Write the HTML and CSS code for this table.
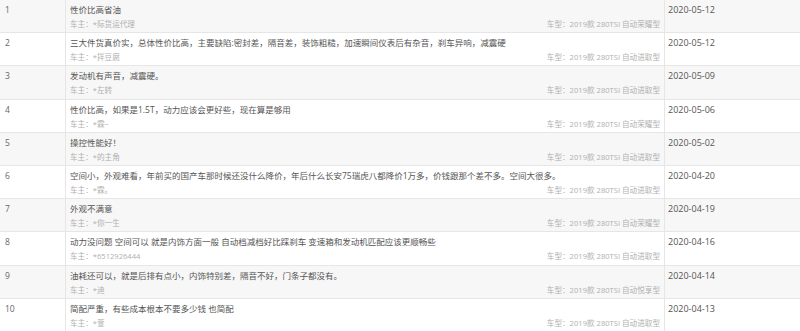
FILE: index.html
```html
<!DOCTYPE html>
<html lang="zh">
<head>
<meta charset="utf-8">
<link rel="stylesheet" href="styles.css">
</head>
<body>
<div class="list">
  <div class="row odd"><div class="num">1</div><div class="main"><div class="title">性价比高省油</div><div class="sub"><span>车主：*际货运代理</span><span>车型：2019款 280TSI 自动荣耀型</span></div></div><div class="date">2020-05-12</div></div>
  <div class="row"><div class="num">2</div><div class="main"><div class="title">三大件货真价实，总体性价比高，主要缺陷:密封差，隔音差，装饰粗糙，加速瞬间仪表后有杂音，刹车异响，减震硬</div><div class="sub"><span>车主：*拌豆腐</span><span>车型：2019款 280TSI 自动进取型</span></div></div><div class="date">2020-05-12</div></div>
  <div class="row odd"><div class="num">3</div><div class="main"><div class="title">发动机有声音，减震硬。</div><div class="sub"><span>车主：*左转</span><span>车型：2019款 280TSI 自动进取型</span></div></div><div class="date">2020-05-09</div></div>
  <div class="row"><div class="num">4</div><div class="main"><div class="title">性价比高，如果是1.5T，动力应该会更好些，现在算是够用</div><div class="sub"><span>车主：*霖~</span><span>车型：2019款 280TSI 自动荣耀型</span></div></div><div class="date">2020-05-06</div></div>
  <div class="row odd"><div class="num">5</div><div class="main"><div class="title">操控性能好！</div><div class="sub"><span>车主：*的主角</span><span>车型：2019款 280TSI 自动进取型</span></div></div><div class="date">2020-05-02</div></div>
  <div class="row"><div class="num">6</div><div class="main"><div class="title">空间小，外观难看，年前买的国产车那时候还没什么降价，年后什么长安75瑞虎八都降价1万多，价钱跟那个差不多。空间大很多。</div><div class="sub"><span>车主：*霖。</span><span>车型：2019款 280TSI 自动进取型</span></div></div><div class="date">2020-04-20</div></div>
  <div class="row odd"><div class="num">7</div><div class="main"><div class="title">外观不满意</div><div class="sub"><span>车主：*你一生</span><span>车型：2019款 280TSI 自动荣耀型</span></div></div><div class="date">2020-04-19</div></div>
  <div class="row"><div class="num">8</div><div class="main"><div class="title">动力没问题 空间可以 就是内饰方面一般 自动档减档好比踩刹车 变速箱和发动机匹配应该更顺畅些</div><div class="sub"><span>车主：*6512926444</span><span>车型：2019款 280TSI 自动进取型</span></div></div><div class="date">2020-04-16</div></div>
  <div class="row odd"><div class="num">9</div><div class="main"><div class="title">油耗还可以，就是后排有点小，内饰特别差，隔音不好，门条子都没有。</div><div class="sub"><span>车主：*迪</span><span>车型：2019款 280TSI 自动悦享型</span></div></div><div class="date">2020-04-14</div></div>
  <div class="row"><div class="num">10</div><div class="main"><div class="title">简配严重，有些成本根本不要多少钱 也简配</div><div class="sub"><span>车主：*萱</span><span>车型：2019款 280TSI 自动进取型</span></div></div><div class="date">2020-04-13</div></div>
</div>
</body>
</html>
```
FILE: styles.css
```css
html, body {
  margin: 0;
  padding: 0;
  background: #ffffff;
}
body {
  font-family: "Open Sans", "Noto Sans CJK SC", sans-serif;
  color: #555555;
}
.list {
  width: 800px;
}
.row {
  display: grid;
  grid-template-columns: 66px 599px 1fr;
  height: 33.2px;
  box-sizing: border-box;
  border-bottom: 1px solid #e6e6e6;
  background: #ffffff;
}
.row.odd {
  background: #f7f7f7;
}
.num, .main {
  border-right: 1px solid #e6e6e6;
}
.num {
  padding: 3px 0 0 5px;
  font-size: 8.5px;
  line-height: 14px;
  color: #666666;
}
.main {
  padding: 3px 4px 0 4px;
}
.title {
  font-size: 8.5px;
  line-height: 14px;
  color: #555555;
  white-space: nowrap;
}
.sub {
  display: flex;
  justify-content: space-between;
  margin-top: 2px;
  font-size: 7.6px;
  line-height: 11px;
  color: #b0b0b0;
}
.date {
  padding: 3px 0 0 3px;
  font-size: 9px;
  line-height: 14px;
  color: #555555;
}
```
